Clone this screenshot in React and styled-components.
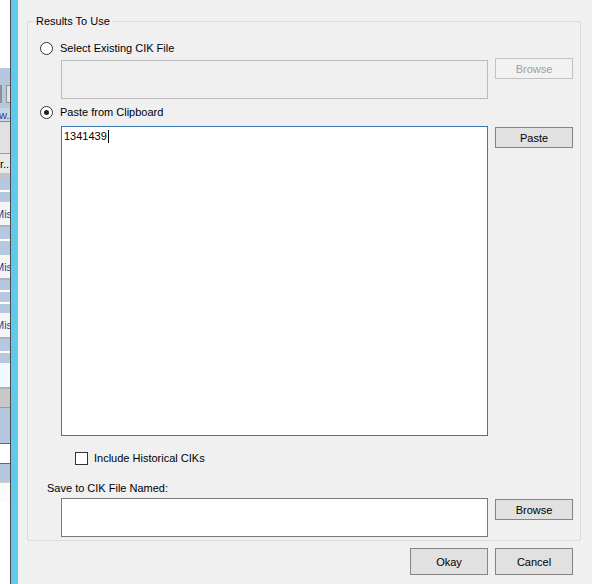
import React from "react";
import styled, { createGlobalStyle } from "styled-components";

const GlobalStyle = createGlobalStyle`
  html, body {
    margin: 0;
    padding: 0;
    background: #f0f0f0;
  }
  body {
    font-family: "Liberation Sans", Arial, sans-serif;
    font-size: 11px;
    color: #000;
  }
  * {
    box-sizing: border-box;
  }
`;

const BLUE = "#b6c8e0";

// what peeks out of the window lying behind the dialog
const stripRows = [
  { h: 68, bg: "#fff" },
  { h: 16, bg: BLUE },
  { h: 20, bg: BLUE, boxes: true },
  { h: 4, bg: BLUE },
  { h: 13, bg: "#c8d5e7", text: "w.A", color: "#2c3f8c", shift: -1 },
  { h: 1, bg: "#8c8c8c" },
  { h: 31, bg: "#e1e1e1" },
  { h: 1, bg: "#9a9a9a" },
  { h: 19, bg: "#e9e9e9", text: "r...", shift: 0 },
  { h: 4, bg: "#c4c4c4" },
  { h: 13, bg: BLUE },
  { h: 2, bg: "#fff" },
  { h: 10, bg: BLUE },
  { h: 23, bg: "#f5f5f5", text: "Mis", color: "#2c3f8c", shift: -5 },
  { h: 2, bg: "#a9b3c0" },
  { h: 12, bg: BLUE },
  { h: 2, bg: "#fff" },
  { h: 14, bg: BLUE },
  { h: 23, bg: "#f5f5f5", text: "Mis", color: "#2c3f8c", shift: -5 },
  { h: 2, bg: "#a9b3c0" },
  { h: 10, bg: BLUE },
  { h: 2, bg: "#fff" },
  { h: 10, bg: BLUE },
  { h: 2, bg: "#fff" },
  { h: 9, bg: BLUE },
  { h: 24, bg: "#f5f5f5", text: "Mis", color: "#2c3f8c", shift: -5 },
  { h: 2, bg: "#a9b3c0" },
  { h: 12, bg: BLUE },
  { h: 2, bg: "#fff" },
  { h: 10, bg: BLUE },
  { h: 24, bg: "#f0fafc" },
  { h: 2, bg: "#a9b3c0" },
  { h: 18, bg: "#c8c8c8" },
  { h: 1, bg: "#9a9a9a" },
  { h: 35, bg: BLUE },
  { h: 1, bg: "#666" },
  { h: 19, bg: "#fff" },
  { h: 1, bg: "#666" },
  { h: 18, bg: BLUE },
  { h: 1, bg: "#d0d0d0" },
  { h: 19, bg: "#fafafa" },
  { h: 82, bg: "#fff" },
];

const Screen = styled.div`
  display: flex;
  width: 592px;
  height: 584px;
  overflow: hidden;
  background: #f0f0f0;
`;

const BackWindow = styled.div`
  width: 10px;
  flex: none;
  display: flex;
  flex-direction: column;
  overflow: hidden;
  background: #fff;
`;

const StripRow = styled.div`
  height: ${(p) => p.$h}px;
  flex: none;
  display: flex;
  align-items: center;
  gap: 4px;
  background: ${(p) => p.$bg};
  color: ${(p) => p.$color || "#000"};
  font-size: 11px;
  line-height: 12px;
  white-space: nowrap;
  overflow: hidden;
`;

const StripText = styled.span`
  flex: none;
  margin-left: ${(p) => p.$shift}px;
`;

const StripBox = styled.span`
  flex: none;
  width: ${(p) => p.$w}px;
  height: 18px;
  background: #e4e4e4;
  border: 1px solid #8f8f8f;
`;

const WindowEdge = styled.div`
  width: 8px;
  flex: none;
  border-left: 1px solid #4a4a4a;
  background: #62c9ee;
`;

const Dialog = styled.div`
  flex: 1;
  display: flex;
  flex-direction: column;
  padding: 14px 11px 0 9px;
`;

const Group = styled.fieldset`
  margin: 0;
  padding: 0 0 3px 0;
  min-width: 0;
  border: 1px solid #d5dde3;
  border-radius: 2px;
`;

const Legend = styled.legend`
  margin-left: 6px;
  padding: 0 2px;
  line-height: 14px;
`;

const OptionRow = styled.div`
  display: flex;
  align-items: center;
  gap: ${(p) => p.$gap || 7}px;
  height: 13px;
  margin: ${(p) => p.$mt}px 0 0 ${(p) => p.$ml}px;
  line-height: 13px;
`;

const Radio = styled.span`
  flex: none;
  width: 13px;
  height: 13px;
  border-radius: 50%;
  border: 1px solid #333;
  background: #fff;
  display: flex;
  align-items: center;
  justify-content: center;

  &::after {
    content: "";
    width: 5px;
    height: 5px;
    border-radius: 50%;
    background: #222;
    display: ${(p) => (p.$checked ? "block" : "none")};
  }
`;

const Check = styled.span`
  flex: none;
  width: 13px;
  height: 13px;
  border: 1px solid #333;
  background: #fff;
`;

const FieldRow = styled.div`
  display: grid;
  grid-template-columns: 427px 78px;
  column-gap: 7px;
  align-items: start;
  margin: ${(p) => p.$mt}px 0 0 33px;
`;

const TextBox = styled.div`
  height: ${(p) => p.$h}px;
  margin-top: ${(p) => p.$offset || 0}px;
  padding: 3px 2px;
  line-height: 13px;
  font-size: 11px;
  border: 1px solid
    ${(p) =>
      p.$state === "focus" ? "#3a78b0" : p.$state === "disabled" ? "#bcbcbc" : "#7a7a7a"};
  background: ${(p) => (p.$state === "disabled" ? "#f0f0f0" : "#fff")};
`;

const Caret = styled.span`
  display: inline-block;
  width: 1px;
  height: 13px;
  margin-left: 1px;
  vertical-align: top;
  background: #000;
`;

const Button = styled.button`
  width: 78px;
  height: ${(p) => p.$h || 21}px;
  margin: ${(p) => p.$mt || 0}px 0 0 0;
  padding: 0;
  font-family: "Liberation Sans", Arial, sans-serif;
  font-size: 11px;
  color: #000;
  background: #e1e1e1;
  border: 1px solid #858585;
  border-radius: 0;

  &:disabled {
    color: #a0a0a0;
    background: #f2f2f2;
    border-color: #c2c2c2;
  }
`;

const Label = styled.div`
  margin: 17px 0 0 19px;
  line-height: 13px;
`;

const Footer = styled.div`
  display: flex;
  justify-content: flex-end;
  gap: 7px;
  margin-top: 7px;
  padding-right: 8px;
`;

export default function App() {
  return (
    <Screen>
      <GlobalStyle />
      <BackWindow>
        {stripRows.map((r, i) => (
          <StripRow key={i} $h={r.h} $bg={r.bg} $color={r.color}>
            {r.boxes && (
              <>
                <StripBox $w={2} />
                <StripBox $w={6} />
              </>
            )}
            {r.text && <StripText $shift={r.shift}>{r.text}</StripText>}
          </StripRow>
        ))}
      </BackWindow>
      <WindowEdge />
      <Dialog>
        <Group>
          <Legend>Results To Use</Legend>

          <OptionRow $mt={14} $ml={12}>
            <Radio />
            Select Existing CIK File
          </OptionRow>
          <FieldRow $mt={3}>
            <TextBox $state="disabled" $h={39} $offset={2} />
            <Button disabled>Browse</Button>
          </FieldRow>

          <OptionRow $mt={7} $ml={12}>
            <Radio $checked />
            Paste from Clipboard
          </OptionRow>
          <FieldRow $mt={7}>
            <TextBox $state="focus" $h={310}>
              1341439
              <Caret />
            </TextBox>
            <Button $mt={1}>Paste</Button>
          </FieldRow>

          <OptionRow $mt={16} $ml={47} $gap={6}>
            <Check />
            Include Historical CIKs
          </OptionRow>

          <Label>Save to CIK File Named:</Label>
          <FieldRow $mt={3}>
            <TextBox $h={39} />
            <Button $mt={1}>Browse</Button>
          </FieldRow>
        </Group>

        <Footer>
          <Button $h={27}>Okay</Button>
          <Button $h={27}>Cancel</Button>
        </Footer>
      </Dialog>
    </Screen>
  );
}
